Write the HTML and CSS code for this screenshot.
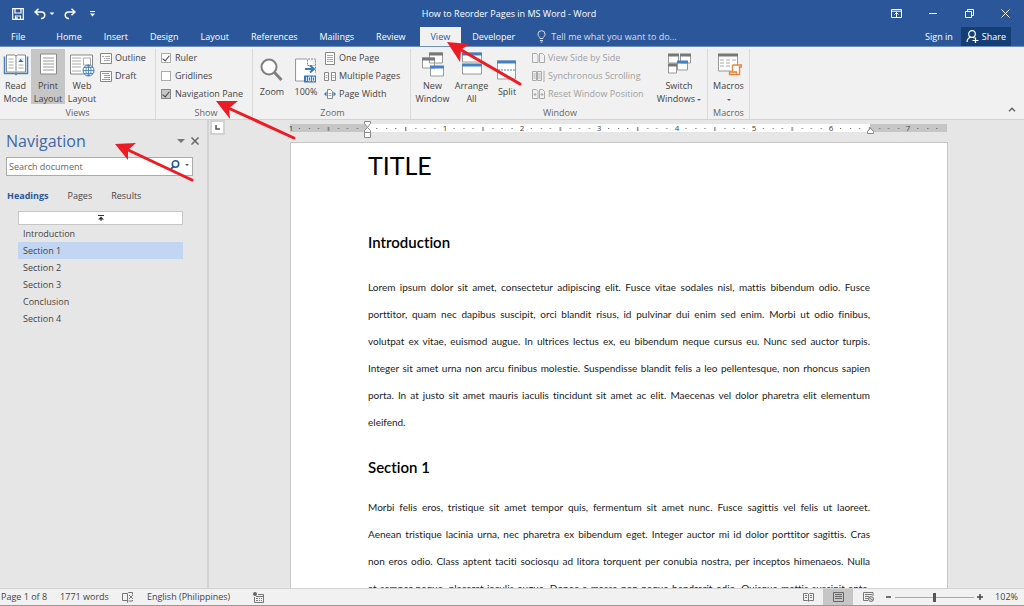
FILE: index.html
```
<!DOCTYPE html>
<html lang="en">
<head>
    <meta charset="UTF-8">
    <meta name="viewport" content="width=device-width, initial-scale=1.0">
    <title>How to Reorder Pages in MS Word - Word</title>
    <link rel="stylesheet" href="styles.css">
</head>
<body>
    <header class="title-bar">
        <div class="quick-access">
            <button aria-label="Save"><svg width="12" height="12" viewBox="0 0 12 12"><path d="M.7.7h10.600v10.600H.7zM3 1v4h6V1M3.500 11V8h5v3M5 9v2" fill="none" stroke="#fff" stroke-width="1.200"/></svg></button>
            <button aria-label="Undo"><svg width="20" height="12" viewBox="0 0 20 12"><path d="M1 4h6.500a3 3 0 0 1 0 6.500H7M4.500.700 1 4l3.500 3.300" fill="none" stroke="#fff" stroke-width="1.500"/><path d="M15.500 4.500h5L18 7z" fill="#fff"/></svg></button>
            <button aria-label="Redo"><svg width="12" height="12" viewBox="0 0 12 12"><path d="M11 4H4.500a3 3 0 0 0 0 6.500H5M7.500.700 11 4 7.500 7.300" fill="none" stroke="#fff" stroke-width="1.500"/></svg></button>
            <button aria-label="Customize toolbar"><svg width="5" height="6" viewBox="0 0 5 6"><path d="M0 .500h5" stroke="#fff"/><path d="M0 2.500h5L2.500 5.500z" fill="#fff"/></svg></button>
        </div>
        <div class="window-title">How to Reorder Pages in MS Word - Word</div>
        <div class="window-buttons">
            <button aria-label="Ribbon options"><svg width="11" height="9" viewBox="0 0 11 9"><path d="M.5.5h10v8H.5zM.5 2.200h10M5.500 8V3.500M3.500 5.500l2-2 2 2" fill="none" stroke="#fff"/></svg></button>
            <button aria-label="Minimize"><svg width="9" height="9" viewBox="0 0 9 9"><path d="M0 4.500h8" stroke="#fff"/></svg></button>
            <button aria-label="Restore"><svg width="9" height="9" viewBox="0 0 9 9"><path d="M.5 2.500h6v6h-6zM2.500 2.500v-2h6v6h-2" fill="none" stroke="#fff"/></svg></button>
            <button aria-label="Close"><svg width="9" height="9" viewBox="0 0 9 9"><path d="M.5.5l8 8M8.500.5l-8 8" stroke="#fff"/></svg></button>
        </div>
    </header>

    <nav class="tabs">
        <a href="#" class="file">File</a>
        <a href="#">Home</a>
        <a href="#">Insert</a>
        <a href="#">Design</a>
        <a href="#">Layout</a>
        <a href="#">References</a>
        <a href="#">Mailings</a>
        <a href="#">Review</a>
        <a href="#" class="active">View</a>
        <a href="#">Developer</a>
        <a href="#" class="tell-me"><svg width="9" height="13" viewBox="0 0 9 13"><path d="M3 8.500C3 7 1 6.500 1 4.200a3.500 3.500 0 0 1 7 0C8 6.500 6 7 6 8.500zM3 10.500h3M3.500 12h2" fill="none" stroke="#d4ddeb"/></svg>Tell me what you want to do...</a>
        <a href="#" class="sign-in">Sign in</a>
        <button class="share"><svg width="13" height="13" viewBox="0 0 13 13"><circle cx="6" cy="4" r="3.300" fill="none" stroke="#fff" stroke-width="1.200"/><path d="M1 12c.3-3 2-4.500 4-4.800M7 7.200l1.500 1M6.500 10.500h6M9.500 7.500v6" fill="none" stroke="#fff" stroke-width="1.200"/></svg>Share</button>
    </nav>

    <section class="ribbon">
        <div class="group views">
            <div class="tools">
                <button class="big">
                    <svg width="26" height="24" viewBox="0 0 26 24"><path d="M1.500 4v17h10.500l1 1 1-1h10.500V4" fill="none" stroke="#4182c4" stroke-width="1.500"/><path d="M3.500 2.500h8l1.500 1 1.500-1h8v17h-8l-1.500 1-1.500-1h-8zM13 3v17" fill="#fff" stroke="#888"/><path d="M5.500 6.500h5M5.500 9.500h5M5.500 12.500h5M5.500 15.500h5M15.500 12.500h5M15.500 15.500h5" stroke="#aaa"/><path d="M15.500 5.500h5v4h-5z" fill="#d6e5f5"/><path d="M15.500 9.500l2-3 3 3z" fill="#3571b8"/></svg>
                    Read<br>Mode
                </button>
                <button class="big selected">
                    <svg width="26" height="24" viewBox="0 0 26 24"><path d="M5.500 1.500h16v20h-16z" fill="#fff" stroke="#888"/><path d="M8 5.500h11M8 8.500h11M8 11.500h11M8 14.500h11M8 17.500h11" stroke="#999"/></svg>
                    Print<br>Layout
                </button>
                <button class="big">
                    <svg width="26" height="24" viewBox="0 0 26 24"><path d="M1.500 2.500h22v19h-22z" fill="#fff" stroke="#888"/><path d="M3 5.500h9M3 8.500h9M3 11.500h9M3 14.500h9M3 18.500h9M14.500 5.500h7v7h-7z" fill="none" stroke="#aaa"/><circle cx="19.500" cy="18" r="5.500" fill="#fff" stroke="#3b78b9"/><path d="M14 18h11M19.500 12.500v11M15 15h9M15 21h9M19.500 12.500c-3.500 3-3.500 8 0 11M19.500 12.500c3.500 3 3.500 8 0 11" fill="none" stroke="#3b78b9" stroke-width=".8"/></svg>
                    Web<br>Layout
                </button>
                <div class="stack">
                    <button><svg width="12" height="11" viewBox="0 0 12 11"><path d="M.5.5h11v10H.5z" fill="#fff" stroke="#888"/><path d="M2 3.500h2M5 3.500h5M4 5.500h1M6 5.500h4M4 7.500h6" stroke="#aaa"/></svg>Outline</button>
                    <button><svg width="12" height="11" viewBox="0 0 12 11"><path d="M.5.5h11v10H.5z" fill="#fff" stroke="#888"/><path d="M2 2.500h7M4 4.500h6M4 6.500h6M2 8.500h8" stroke="#999"/></svg>Draft</button>
                </div>
            </div>
            <div class="group-name">Views</div>
        </div>
        <div class="group show">
            <div class="tools">
                <div class="stack">
                    <label><input type="checkbox" checked>Ruler</label>
                    <label><input type="checkbox">Gridlines</label>
                    <label><input type="checkbox" class="hover" checked>Navigation Pane</label>
                </div>
            </div>
            <div class="group-name">Show</div>
        </div>
        <div class="group zoom">
            <div class="tools">
                <button class="big">
                    <svg width="26" height="24" viewBox="0 0 26 24"><circle cx="10" cy="8.500" r="7.500" fill="#fff" stroke="#808080" stroke-width="2"/><path d="M15.500 14l7 7.500" stroke="#808080" stroke-width="3"/></svg>
                    Zoom
                </button>
                <button class="big">
                    <svg width="26" height="24" viewBox="0 0 26 24"><path d="M3.500.500h11l7 7v15h-18z" fill="#fff"/><path d="M14 .500H2.500v22H11" fill="none" stroke="#999"/><path d="M14.500 1v6h7M15 .500h7.500v14" fill="none" stroke="#888" stroke-dasharray="2 1"/><path d="M12 10.500h8M17 7l4 3.500-4 3.500" fill="none" stroke="#3b78b9" stroke-width="2"/><path d="M11 17h12v7H11z" fill="#3b78b9"/><path d="M13.500 18.500v4M15.500 18.500h2v4h-2zM19.500 18.500h2v4h-2z" fill="none" stroke="#fff" stroke-width=".8"/></svg>
                    100%
                </button>
                <div class="stack">
                    <button><svg width="12" height="13" viewBox="0 0 12 13"><path d="M1.500.5h9v12h-9z" fill="#fff" stroke="#888"/><path d="M3 3.500h6M3 5.500h6M3 7.500h6M3 9.500h6" stroke="#aaa"/></svg>One Page</button>
                    <button><svg width="12" height="9" viewBox="0 0 12 9"><path d="M.5.5h4v8h-4zM7.500.5h4v8h-4z" fill="#fff" stroke="#888"/><path d="M1.500 3.500h2M1.500 5.500h2M8.500 3.500h2M8.500 5.500h2" stroke="#aaa"/></svg>Multiple Pages</button>
                    <button><svg width="12" height="10" viewBox="0 0 12 10"><path d="M3.500.5h3l2 2v7h-5z" fill="#fff" stroke="#888"/><path d="M4.500 4.500h3M4.500 6.500h3" stroke="#aaa"/><path d="M2.500 2.500v5L0 5zM9.500 2.500v5L12 5z" fill="#3b78b9"/></svg>Page Width</button>
                </div>
            </div>
            <div class="group-name">Zoom</div>
        </div>
        <div class="group window">
            <div class="tools">
                <button class="big">
                    <svg width="26" height="26" viewBox="0 0 26 26"><path d="M9.500 1.500h13v10h-13zM2.500 6.500h12v10h-12zM10.500 15.500h13v9h-13z" fill="#fff" stroke="#999"/><path d="M9 1h14v3H9zM2 6h13v3H2z" fill="#777"/><path d="M10 14h14v3H10z" fill="#4182c4"/></svg>
                    New<br>Window
                </button>
                <button class="big">
                    <svg width="26" height="26" viewBox="0 0 26 26"><path d="M3.500 1.500h19v9h-19zM3.500 13.500h19v9h-19z" fill="#fff" stroke="#999"/><path d="M3 1h20v3H3zM3 12h20v3H3z" fill="#4182c4"/></svg>
                    Arrange<br>All
                </button>
                <button class="big split">
                    <svg width="26" height="24" viewBox="0 0 26 24"><path d="M3.500 2.500h18v18h-18z" fill="#fff" stroke="#999"/><path d="M3 2h19v3H3z" fill="#4182c4"/><path d="M4 11.500h17" stroke="#4182c4" stroke-dasharray="2 1"/></svg>
                    Split
                </button>
                <div class="stack side">
                    <button disabled><svg width="13" height="10" viewBox="0 0 13 10"><path d="M.5.5h4l1.500 2v7H.5zM7.500.5h3l2 2v7h-5z" fill="none" stroke="#aaa"/></svg>View Side by Side</button>
                    <button disabled><svg width="13" height="11" viewBox="0 0 13 11"><path d="M.5.500h4v9h-4zM5.500.5h4v9h-4zM12 0v11M1.500 3h2M1.500 5h2M1.500 7h2M6.500 3h2M6.500 5h2M6.500 7h2" fill="none" stroke="#aaa"/></svg>Synchronous Scrolling</button>
                    <button disabled><svg width="13" height="10" viewBox="0 0 13 10"><path d="M.5.500h4l1.500 2v7H.5zM7.500.5h3l2 2v7h-5zM1.500 5.500h3M8.500 5.500h3M3 4v3M10 4v3" fill="none" stroke="#aaa"/></svg>Reset Window Position</button>
                </div>
                <button class="big switch">
                    <svg width="26" height="24" viewBox="0 0 26 24"><path d="M2.500 2.500h10v8h-10zM14.500 2.500h10v8h-10zM2.500 12.500h8v8h-8zM11.500 9.500h10v8h-10z" fill="#fff" stroke="#999"/><path d="M2 1h11v3H2zM14 1h11v3H14zM2 11h9v3H2z" fill="#777"/><path d="M11 8h11v3H11z" fill="#4182c4"/></svg>
                    Switch<br>Windows <span class="caret"></span>
                </button>
            </div>
            <div class="group-name">Window</div>
        </div>
        <div class="group macros">
            <div class="tools">
                <button class="big">
                    <svg width="26" height="24" viewBox="0 0 26 24"><path d="M2.500 2.500h19v16h-19z" fill="#fff" stroke="#999"/><path d="M2 1h20v3H2z" fill="#777"/><path d="M4 7.500h4M10 7.500h4M16 7.500h4M4 10.500h4M10 10.500h4M4 13.500h4M10 13.500h4" stroke="#aaa"/><path d="M16.500 12.500h9v2h-2v7.500h-9M16.500 12.500v7h-3v2.500h7v-2.500h-4" fill="#fff" stroke="#e8833a" stroke-width="1.400"/></svg>
                    Macros<br><span class="caret"></span>
                </button>
            </div>
            <div class="group-name">Macros</div>
        </div>
        <button class="collapse" aria-label="Collapse the ribbon"><svg width="8" height="5" viewBox="0 0 8 5"><path d="M1 4.300l3-3 3 3" fill="none" stroke="#666" stroke-width="1.500"/></svg></button>
    </section>

    <main>
        <aside class="navigation">
            <div class="nav-head">
                <h2>Navigation</h2>
                <button aria-label="Pane options"><svg width="8" height="4" viewBox="0 0 8 4"><path d="M0 0h8L4 4z" fill="#777"/></svg></button>
                <button aria-label="Close pane"><svg width="8" height="8" viewBox="0 0 8 8"><path d="M.5.5l7 7M7.500.5l-7 7" stroke="#666" stroke-width="1.500"/></svg></button>
            </div>
            <div class="search">
                <input type="text" placeholder="Search document" aria-label="Search document">
                <button aria-label="Search"><svg width="20" height="10" viewBox="0 0 20 10"><circle cx="5.500" cy="4" r="3.200" fill="none" stroke="#2b579a" stroke-width="1.600"/><path d="M3.500 6.500L1 9" stroke="#2b579a" stroke-width="1.800"/><path d="M15 4h4l-2 2z" fill="#555"/></svg></button>
            </div>
            <div class="nav-tabs">
                <a href="#" class="active">Headings</a>
                <a href="#">Pages</a>
                <a href="#">Results</a>
            </div>
            <div class="headings">
                <button class="jump" aria-label="Jump to beginning"><svg width="6" height="6" viewBox="0 0 6 6"><path d="M0 .500h6M3 3v3" stroke="#333"/><path d="M0 4.500h6L3 1.500z" fill="#333"/></svg></button>
                <a href="#introduction">Introduction</a>
                <a href="#section1" class="current">Section 1</a>
                <a href="#">Section 2</a>
                <a href="#">Section 3</a>
                <a href="#">Conclusion</a>
                <a href="#">Section 4</a>
            </div>
        </aside>

        <div class="workspace">
            <button class="tab-stop" aria-label="Tab stop"><svg width="5" height="5" viewBox="0 0 5 5"><path d="M1 0v4h4" fill="none" stroke="#555" stroke-width="1.500"/></svg></button>
            <svg class="ruler" width="658" height="18" viewBox="0 0 658 18">
                <defs>
                    <pattern id="ticks" x="77.300" width="77.300" height="18" patternUnits="userSpaceOnUse">
                        <path d="M9 8.500h1M19 8.500h1M28 8.500h1M48 8.500h1M57 8.500h1M67 8.500h1" stroke="#555"/>
                        <path d="M38.500 7v4" stroke="#555"/>
                    </pattern>
                </defs>
                <path d="M0 4h78v8H0zM580 4h77v8h-77z" fill="#c6c6c6"/>
                <path d="M78 4h502v8H78z" fill="#fff"/>
                <path d="M3 4h650v8H3z" fill="url(#ticks)"/>
                <g class="ruler-numbers">
                    <text x="1" y="11">1</text>
                    <text x="155" y="11">1</text>
                    <text x="232" y="11">2</text>
                    <text x="309" y="11">3</text>
                    <text x="387" y="11">4</text>
                    <text x="464" y="11">5</text>
                    <text x="541" y="11">6</text>
                    <text x="618" y="11">7</text>
                </g>
                <path d="M74.500 1.500h6v2l-3 4-3-4zM74.500 12.500v-2l3-3 3 3v2zM74.500 12.500h6v5h-6zM577.500 13.500v-2l3-3.500 3 3.500v2z" fill="#fff" stroke="#888"/>
            </svg>
            <article class="page">
                <h1>TITLE</h1>
                <h2 id="introduction">Introduction</h2>
                <p>Lorem ipsum dolor sit amet, consectetur adipiscing elit. Fusce vitae sodales nisl, mattis bibendum odio. Fusce porttitor, quam nec dapibus suscipit, orci blandit risus, id pulvinar dui enim sed enim. Morbi ut odio finibus, volutpat ex vitae, euismod augue. In ultrices lectus ex, eu bibendum neque cursus eu. Nunc sed auctor turpis. Integer sit amet urna non arcu finibus molestie. Suspendisse blandit felis a leo pellentesque, non rhoncus sapien porta. In at justo sit amet mauris iaculis tincidunt sit amet ac elit. Maecenas vel dolor pharetra elit elementum eleifend.</p>
                <h2 id="section1">Section 1</h2>
                <p class="full-lines">Morbi felis eros, tristique sit amet tempor quis, fermentum sit amet nunc. Fusce sagittis vel felis ut laoreet.<br>
                Aenean tristique lacinia urna, nec pharetra ex bibendum eget. Integer auctor mi id dolor porttitor sagittis. Cras<br>
                non eros odio. Class aptent taciti sociosqu ad litora torquent per conubia nostra, per inceptos himenaeos. Nulla<br>
                at semper neque, placerat iaculis augue. Donec a massa non neque hendrerit odio. Quisque mattis suscipit ante.</p>
            </article>
        </div>
    </main>

    <footer class="status-bar">
        <span>Page 1 of 8</span>
        <span>1771 words</span>
        <svg width="12" height="11" viewBox="0 0 12 11"><path d="M5.500 1.500h-5v7h5v2-9l1-1h4v2M10.500 8v1h-4M7 3l4 4M11 3L7 7" fill="none" stroke="#777"/></svg>
        <span>English (Philippines)</span>
        <svg class="macro-icon" width="11" height="11" viewBox="0 0 11 11"><path d="M1.500 5v5.500h9v-8H5M3 4.500h7M3 6.500h2M6 6.500h1M8 6.500h1M3 8.500h2M6 8.500h1M8 8.500h1" fill="none" stroke="#777"/><circle cx="2" cy="2" r="2" fill="#666"/></svg>
        <div class="view-buttons">
            <button aria-label="Read mode"><svg width="11" height="10" viewBox="0 0 11 10"><path d="M.5 1.500h4l1 1 1-1h4v7h-4l-1 1-1-1h-4zM5.500 2v7M2 3.500h2M2 5.500h2M7 3.500h2M7 5.500h2" fill="none" stroke="#777"/></svg></button>
            <button class="selected" aria-label="Print layout"><svg width="11" height="10" viewBox="0 0 11 10"><path d="M.5.5h10v9H.5zM2 2.500h7M2 4.500h7M2 6.500h7" fill="none" stroke="#666"/></svg></button>
            <button aria-label="Web layout"><svg width="11" height="10" viewBox="0 0 11 10"><path d="M10 4V.5H.5v8H5M2 2.500h7M2 4.500h4M2 6.500h3" fill="none" stroke="#777"/><circle cx="8" cy="7" r="2.500" fill="#ddd" stroke="#777"/><path d="M6 5.500l4 3" stroke="#777"/></svg></button>
        </div>
        <div class="zoom-control">
            <button aria-label="Zoom out"><svg width="6" height="6" viewBox="0 0 6 6"><path d="M0 3h5" stroke="#444" stroke-width="1.500"/></svg></button>
            <input type="range" min="10" max="194" value="102" aria-label="Zoom level">
            <button aria-label="Zoom in"><svg width="6" height="6" viewBox="0 0 6 6"><path d="M0 3h6M3 0v6" stroke="#444" stroke-width="1.500"/></svg></button>
            <span>102%</span>
        </div>
    </footer>

    <!-- callout arrows -->
    <svg class="arrows" width="530" height="190" viewBox="0 0 530 190">
        <g stroke="#ed1c24" stroke-width="3" stroke-linecap="round">
            <path d="M456 47l64 37M226 107l68 31M126 149l66 31"/>
        </g>
        <g fill="#ed1c24">
            <path d="M447 42l22 2-8 6-1 12z"/>
            <path d="M216 101l22 0-9 7 1 11z"/>
            <path d="M115 144l21-1-8 7 0 10z"/>
        </g>
    </svg>
</body>
</html>
```
FILE: styles.css
```
:root {
    --blue: #2b579a;
    --ribbon-bg: #f1f1f1;
    --pane-bg: #e6e6e6;
    --selected: #c6c6c6;
    --text: #444;
}

* {
    box-sizing: border-box;
}

body {
    margin: 0;
    height: 100vh;
    display: flex;
    flex-direction: column;
    overflow: hidden;
    position: relative;
    font-family: "Open Sans", "Noto Sans", sans-serif;
    font-size: 9px;
    line-height: 12px;
    color: var(--text);
    background-color: var(--pane-bg);
}

button {
    padding: 0;
    border: none;
    background: none;
    font: inherit;
    color: inherit;
}

a {
    color: inherit;
    text-decoration: none;
}

svg {
    flex: none;
}

/* title bar and tabs */
.title-bar {
    display: grid;
    grid-template-columns: 1fr auto 1fr;
    align-items: center;
    height: 27px;
    background-color: var(--blue);
    color: #fff;
}

.title-bar button {
    display: flex;
}

.window-title {
    padding-right: 6px;
}

.quick-access {
    display: flex;
    align-items: center;
    gap: 10px;
    padding: 0 12px;
}

.quick-access button:last-child {
    margin-left: 4px;
}

.window-buttons {
    display: flex;
    justify-content: flex-end;
    align-items: center;
    gap: 27px;
    padding-right: 14px;
}

.tabs {
    display: flex;
    height: 20px;
    background-color: var(--blue);
    border-bottom: 1px solid #6f8fbd;
    color: #fff;
    line-height: 20px;
}

.tabs a {
    padding: 0 11px;
}

.tabs .file {
    margin-right: 9px;
}

.tabs .active {
    margin-left: 3px;
    background-color: var(--ribbon-bg);
    color: var(--blue);
}

.tabs .tell-me {
    display: flex;
    align-items: center;
    gap: 5px;
    color: #d4ddeb;
}

.tabs .sign-in {
    margin-left: auto;
    padding: 0 8px;
}

.share {
    display: flex;
    align-items: center;
    gap: 3px;
    margin-right: 13px;
    padding: 0 5px;
    background-color: #143f76;
}

/* ribbon */
.ribbon {
    display: flex;
    height: 73px;
    padding: 2px 0 0;
    background-color: var(--ribbon-bg);
    border-bottom: 1px solid #d2d2d2;
}

.group {
    display: flex;
    flex-direction: column;
    justify-content: space-between;
    border-right: 1px solid #dadada;
}

.tools {
    display: flex;
    align-items: flex-start;
}

.group-name {
    text-align: center;
    color: #666;
}

.big {
    width: 34px;
    height: 55px;
    display: block;
    text-align: center;
    line-height: 13px;
    white-space: nowrap;
}

.big svg {
    display: block;
    height: 27px;
    margin: 2px auto 1px;
}

.selected {
    background-color: var(--selected);
}

.stack {
    display: grid;
    grid-auto-rows: 18px;
    margin-left: 1px;
}

.stack button,
.stack label {
    display: flex;
    align-items: center;
    gap: 3px;
    white-space: nowrap;
}

.stack button:disabled {
    color: #a0a0a0;
}

.stack input {
    appearance: none;
    width: 10px;
    height: 10px;
    margin: 0 1px 0 0;
    border: 1px solid #ababab;
    background-color: #fff;
}

.stack input:checked::before {
    content: "";
    display: block;
    width: 3px;
    height: 6px;
    margin: 0 auto;
    border: solid #444;
    border-width: 0 1px 1px 0;
    transform: rotate(40deg);
}

.stack .hover {
    background-color: var(--selected);
    border-color: #888;
}

.caret {
    display: inline-block;
    border: 2px solid transparent;
    border-top-color: #666;
    border-bottom: none;
    vertical-align: middle;
}

.views {
    width: 156px;
}

.views .big:first-child {
    width: 31px;
}

.show {
    width: 97px;
    padding-left: 4px;
}

.zoom {
    width: 158px;
    padding-left: 2px;
}

.window {
    width: 297px;
    padding-left: 2px;
}

.window .big {
    width: 39px;
}

.window .split {
    width: 32px;
}

.window .side {
    width: 120px;
    margin-left: 9px;
}

.window .switch {
    width: 54px;
}

.macros {
    width: 42px;
}

.macros .big {
    width: 100%;
}

.collapse {
    margin: auto 8px 4px auto;
}

/* main area */
main {
    flex: 1;
    min-height: 0;
    display: flex;
}

.navigation {
    width: 209px;
    padding: 10px 8px 0 6px;
    border-right: 2px solid #d2d2d2;
}

.nav-head {
    display: flex;
    align-items: center;
    gap: 6px;
    height: 22px;
}

.nav-head h2 {
    margin: 0 auto 0 0;
    font-size: 16px;
    font-weight: normal;
    color: #3e68a8;
}

.nav-head button {
    display: flex;
}

.search {
    display: flex;
    align-items: center;
    height: 19px;
    margin: 5px 6px 0 0;
    padding: 0 2px;
    background-color: #fff;
    border: 1px solid #ababab;
}

.search input {
    flex: 1;
    min-width: 0;
    padding: 0;
    border: none;
    outline: none;
    font: inherit;
}

.search input::placeholder {
    color: #666;
}

.nav-tabs {
    display: flex;
    gap: 19px;
    padding: 14px 1px 9px;
}

.nav-tabs .active {
    font-weight: bold;
    color: var(--blue);
}

.headings {
    display: grid;
    padding: 0 16px 0 12px;
}

.headings a {
    height: 17px;
    padding: 0 5px;
    line-height: 17px;
}

.headings .current {
    background-color: #c2d5f2;
}

.jump {
    height: 14px;
    display: flex;
    align-items: center;
    justify-content: center;
    background-color: #fff;
    border: 1px solid #c6c6c6;
}

.workspace {
    flex: 1;
    min-width: 0;
    display: grid;
    grid-template-columns: 16px minmax(0, 1fr);
    grid-template-rows: 22px 1fr;
    justify-items: center;
    padding: 0 11px 0 0;
    overflow: hidden;
}

.tab-stop {
    width: 15px;
    height: 15px;
    display: flex;
    align-items: center;
    justify-content: center;
    background-color: #fff;
    border: 2px solid #d2d2d2;
}

.ruler {
    overflow: visible;
}

.ruler-numbers {
    font-size: 8px;
    fill: #444;
    text-anchor: middle;
}

.page {
    grid-column: 2;
    width: 658px;
    padding: 7px 77px 0;
    background-color: #fff;
    border: 1px solid #c6c6c6;
    border-bottom: none;
    font-family: Lato, sans-serif;
    font-variant-ligatures: none;
    color: #000;
}

.page h1 {
    margin: 0;
    font-size: 25px;
    font-weight: normal;
    line-height: 30px;
}

.page h2 {
    margin: 51px 0 21px;
    font-size: 15px;
    font-weight: 600;
    line-height: 22px;
}

.page p {
    margin: 0;
    font-size: 10px;
    line-height: 27px;
    text-align: justify;
    color: #222;
}

.page p + h2 {
    margin: 20px 0 16px;
}

.page .full-lines {
    text-align-last: justify;
}

/* status bar */
.status-bar {
    display: flex;
    align-items: center;
    gap: 13px;
    height: 18px;
    padding: 0 6px 0 1px;
    background-color: var(--ribbon-bg);
    border-top: 1px solid #d2d2d2;
    border-bottom: 1px solid #999;
}

.macro-icon {
    margin-left: 10px;
}

.view-buttons {
    display: flex;
    height: 100%;
    margin-left: auto;
}

.view-buttons button {
    width: 30px;
    display: flex;
    align-items: center;
    justify-content: center;
}

.zoom-control {
    display: flex;
    align-items: center;
    gap: 3px;
    margin-left: -10px;
}

.zoom-control button {
    display: flex;
}

.zoom-control span {
    margin-left: 9px;
}

.zoom-control input {
    appearance: none;
    width: 79px;
    height: 9px;
    margin: 0;
    background: linear-gradient(#aaa, #aaa) center / 100% 1px no-repeat;
}

.zoom-control input::-webkit-slider-thumb {
    appearance: none;
    width: 3px;
    height: 9px;
    background-color: #555;
}

.arrows {
    position: absolute;
    top: 0;
    left: 0;
    pointer-events: none;
}
```
